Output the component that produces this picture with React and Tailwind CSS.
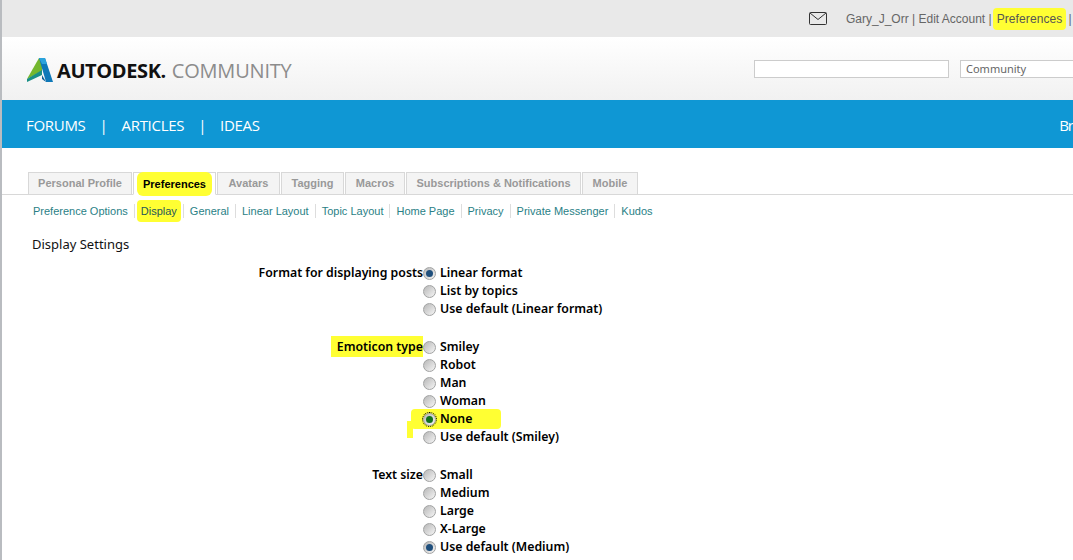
import React from 'react';

const tabs = [
    { label: 'Personal Profile', w: 'w-[104px]' },
    { label: 'Preferences', w: 'w-[83px]', active: true },
    { label: 'Avatars', w: 'w-[63px]' },
    { label: 'Tagging', w: 'w-[63px]' },
    { label: 'Macros', w: 'w-[60px]' },
    { label: 'Subscriptions & Notifications', w: 'w-[175px]' },
    { label: 'Mobile', w: 'w-[56px]' },
];

const subLinks = ['Preference Options', 'Display', 'General', 'Linear Layout', 'Topic Layout', 'Home Page', 'Privacy', 'Private Messenger', 'Kudos'];

const groups = [
    {
        label: 'Format for displaying posts',
        options: [
            { text: 'Linear format', checked: 'blue' },
            { text: 'List by topics' },
            { text: 'Use default (Linear format)' },
        ],
    },
    {
        label: 'Emoticon type',
        mark: true,
        options: [
            { text: 'Smiley' },
            { text: 'Robot' },
            { text: 'Man' },
            { text: 'Woman' },
            { text: 'None', checked: 'green', mark: true },
            { text: 'Use default (Smiley)' },
        ],
    },
    {
        label: 'Text size',
        options: [
            { text: 'Small' },
            { text: 'Medium' },
            { text: 'Large' },
            { text: 'X-Large' },
            { text: 'Use default (Medium)', checked: 'blue' },
        ],
    },
];

const Radio = ({ checked }) => (
    <span className={`relative flex items-center justify-center w-[13px] h-[13px] mt-[1px] shrink-0 rounded-full border border-[#a2a3a3] bg-gradient-to-br from-[#b8b8b8] to-[#f6f6f6] ${checked === 'green' ? 'outline-1 outline-dotted outline-black' : ''}`}>
        {checked === 'blue' && <span className="w-[7px] h-[7px] rounded-full bg-[#1f4f7c]" />}
        {checked === 'green' && <span className="w-[7px] h-[7px] rounded-full bg-[#12701c]" />}
    </span>
);

const Logo = () => (
    <svg width="26" height="25" viewBox="0 0 26 25" className="shrink-0">
        <path d="M0 21 L12 0 L15 0 L15 13 Z" fill="#74b72e" />
        <path d="M0 24 L0 21 L15 12 L15 17 Z" fill="#1a8f86" />
        <path d="M12 0 L18 0 L26 24 L19 24 Z" fill="#0e78b8" />
        <path d="M12 0 L18 0 L20 6 L15 6 Z" fill="#2ba3dc" />
        <path d="M15 17 L19 24 L15 21 Z" fill="#0b5c94" />
    </svg>
);

const App = () => {
    return (
        <div className="w-[1073px] h-[560px] overflow-hidden bg-white border-l-2 border-[#b9bcc0] font-['Liberation_Sans',sans-serif]">
            <div className="h-[37px] bg-[#e9e9e9] flex items-center pl-[809px] pt-[1px] -ml-[2px] text-[12px] text-[#666] whitespace-nowrap">
                <svg width="18" height="13" viewBox="0 0 18 13" fill="none" stroke="#333" strokeWidth="1" className="mr-[19px] mb-[2px]">
                    <rect x="0.5" y="0.5" width="17" height="12" rx="1" />
                    <path d="M1 1 L9 7.5 L17 1" />
                </svg>
                <span>Gary_J_Orr | Edit Account |</span>
                <span className="bg-[#ffff33] text-[#555] px-[4px] ml-[1px] py-[2px] rounded-sm tracking-[0.1px]">Preferences</span>
                <span className="ml-[2px]">|</span>
            </div>

            <div className="h-[63px] bg-gradient-to-b from-white to-[#f1f1f1] flex items-center pl-[25px] -ml-[2px] whitespace-nowrap">
                <div className="flex items-center ml-[2px] w-[727px] shrink-0 pt-[4px]">
                    <Logo />
                    <span className="ml-[4px] text-[20px] font-bold text-[#111] font-['Open_Sans',sans-serif] tracking-[-0.4px]">AUTODESK.</span>
                    <span className="ml-[6px] text-[20px] text-[#8c8c8c] font-['Open_Sans',sans-serif] tracking-[-0.2px]">COMMUNITY</span>
                </div>
                <input className="w-[195px] h-[18px] shrink-0 bg-white border border-[#cccccc]" />
                <div className="ml-[11px] w-[130px] h-[18px] bg-white border border-[#cccccc] pl-[5px] text-[11px] leading-[16px] text-[#666] font-['Noto_Sans',sans-serif] shrink-0">Community</div>
            </div>

            <div className="h-[48px] bg-[#0f97d4] flex items-center justify-between pl-[24px] pt-[3px] text-white text-[15px] tracking-[-0.3px] font-['Open_Sans',sans-serif] whitespace-nowrap">
                <div className="flex items-center">
                    <span>FORUMS</span>
                    <span className="mx-[14px]">|</span>
                    <span>ARTICLES</span>
                    <span className="mx-[14px]">|</span>
                    <span>IDEAS</span>
                </div>
                <span className="tracking-[-1px]">Br</span>
            </div>

            <div className="mt-[24px] pl-[26px] flex border-b border-[#d8d8d8] h-[23px]">
                {tabs.map((t) => (
                    <div
                        key={t.label}
                        className={`${t.w} h-[23px] mr-[1px] flex items-center justify-center text-[11px] font-bold border border-[#d8d8d8] whitespace-nowrap ${t.active ? 'bg-white border-b-white text-black' : 'bg-[#f4f4f4] text-[#999]'}`}
                    >
                        {t.active ? <span className="bg-[#ffff33] px-[6px] py-[4px] mt-[1px] rounded-md">{t.label}</span> : t.label}
                    </div>
                ))}
            </div>

            <div className="mt-[9px] pl-[31px] flex items-center h-[14px] text-[11px] text-[#2a7f86] whitespace-nowrap">
                {subLinks.map((l, i) => (
                    <React.Fragment key={l}>
                        {i > 0 && <span className="w-px h-[14px] bg-[#dddddd] mx-[6px]" />}
                        {l === 'Display' ? <span className="bg-[#ffff33] text-[#24565a] px-[4px] -mx-[4px] py-[3px] rounded-sm">{l}</span> : <span>{l}</span>}
                    </React.Fragment>
                ))}
            </div>

            <h2 className="mt-[17px] pl-[30px] text-[13px] leading-[18px] text-[#111] font-['Noto_Sans',sans-serif]">Display Settings</h2>

            <div className="mt-[11px] flex flex-col gap-[20px] text-[12.3px] font-semibold text-black font-['Noto_Sans',sans-serif]">
                {groups.map((g) => (
                    <div key={g.label} className="flex">
                        <div className="w-[421px] text-right leading-[18px] whitespace-nowrap">
                            {g.mark ? <span className="bg-[#ffff33] pl-[6px] py-[2px]">{g.label}</span> : g.label}
                        </div>
                        <div className="flex flex-col">
                            {g.options.map((o) => (
                                <div key={o.text} className="relative h-[18px] flex items-center gap-[4px] whitespace-nowrap">
                                    {o.mark && (
                                        <>
                                            <span className="absolute -left-[12px] -top-[1px] w-[90px] h-[20px] bg-[#ffff33] rounded-sm" />
                                            <span className="absolute -left-[16px] top-[11px] w-[6px] h-[17px] bg-[#ffff33]" />
                                        </>
                                    )}
                                    <span className="relative flex items-center gap-[4px]">
                                        <Radio checked={o.checked} />
                                        <span>{o.text}</span>
                                    </span>
                                </div>
                            ))}
                        </div>
                    </div>
                ))}
            </div>
        </div>
    );
};

export default App;
